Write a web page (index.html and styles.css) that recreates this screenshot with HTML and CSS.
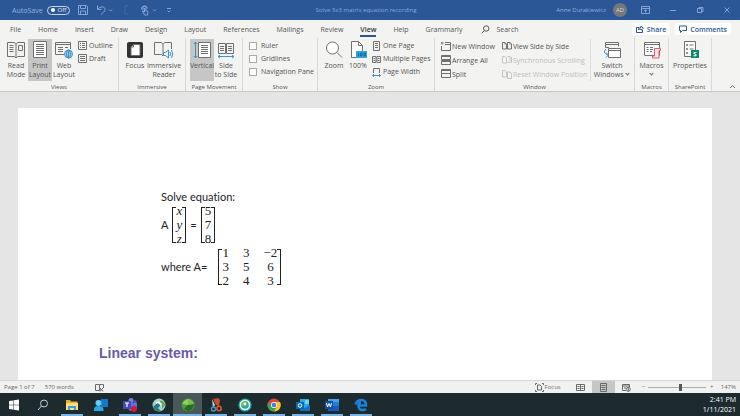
FILE: index.html
```html
<!DOCTYPE html>
<html lang="en">
<head>
<meta charset="utf-8">
<title>Solve 3x3 matrix equation recording</title>
<link rel="stylesheet" href="styles.css">
</head>
<body>
<header class="titlebar">
  <div class="quick">
    <label class="autosave">AutoSave <input type="checkbox" role="switch"><span class="switch">Off</span></label>
    <button class="qbtn" aria-label="Save"><svg width="10" height="10" viewBox="0 0 10 10"><path d="M.5.5h8l1 1v8h-9zM2.5.5v3h5v-3M2.5 9.500v-3.500h5v3.500"/></svg></button>
    <button class="qbtn" aria-label="Undo"><svg width="18" height="10" viewBox="0 0 18 10"><path d="M1.500.5v4h4M1.500 4.500C4 1 9 1 9 4.500c0 2-2 3-4 5M13 4.500l1.500 1.500L16 4.500"/></svg></button>
    <button class="qbtn dim" aria-label="Redo"><svg width="10" height="10" viewBox="0 0 10 10"><path d="M6 1H3v8h3"/></svg></button>
    <button class="qbtn" aria-label="Touch mode"><svg width="18" height="11" viewBox="0 0 18 11"><path d="M3 5.500V2.500a1.500 1.500 0 0 1 3 0V5M1.500 4.500a3 3 0 1 1 6-1M4.500 3v4L2.500 6l2 4h3l.5-3.500L4.500 5M13 4.500l1.500 1.500L16 4.500"/></svg></button>
    <button class="qbtn" aria-label="Customize toolbar"><svg width="6" height="6" viewBox="0 0 6 6"><path d="M1 1.500h4M1.500 3.500L3 5l1.500-1.500"/></svg></button>
  </div>
  <div class="doc-name">Solve 3x3 matrix equation recording</div>
  <div class="account">
    <span>Anne Durakiewicz</span><span class="avatar">AD</span>
    <button class="winbtn" aria-label="Ribbon display options"><svg width="9" height="8" viewBox="0 0 9 8"><path d="M.5.5h8v7h-8zM.5 2.500h8M4.500 6.500V4M3.200 5l1.300-1.300L5.800 5"/></svg></button>
    <button class="winbtn" aria-label="Minimize"><svg width="8" height="8" viewBox="0 0 8 8"><path d="M1 4.500h6"/></svg></button>
    <button class="winbtn" aria-label="Restore"><svg width="8" height="8" viewBox="0 0 8 8"><path d="M1.500 2.500h4v4h-4zM3 2.500v-1h4v4H5.500"/></svg></button>
    <button class="winbtn" aria-label="Close"><svg width="8" height="8" viewBox="0 0 8 8"><path d="M1.500 1.500l5 5M6.500 1.500l-5 5"/></svg></button>
  </div>
</header>

<nav class="tabs">
  <button>File</button><button>Home</button><button>Insert</button><button>Draw</button><button>Design</button><button>Layout</button><button>References</button><button>Mailings</button><button>Review</button><button class="current">View</button><button>Help</button><button>Grammarly</button>
  <button class="search"><svg width="9" height="9" viewBox="0 0 9 9"><circle cx="5.200" cy="3.500" r="2.700"/><path d="M3.300 5.500L.7 8.300"/></svg>Search</button>
  <div class="share">
    <button><svg width="8" height="8" viewBox="0 0 8 8"><path d="M3 2.500H.5v5h6V5M2.500 5c0-2 1-2.500 2.500-2.500V1l2.500 2.200L5 5.200V4C4 4 3 4 2.500 5z"/></svg>Share</button>
    <button><svg width="8" height="8" viewBox="0 0 8 8"><path d="M.5 1h7v4.500H3.500l-2 2v-2h-1z"/></svg>Comments</button>
  </div>
</nav>

<main class="ribbon">
  <section class="group">
    <div class="tools">
      <button class="big"><svg width="18" height="18" viewBox="0 0 18 18"><path d="M9 3.500L7.500 1.500h-7v14h7L9 17l1.500-1.500h7v-14h-7zM9 3.500V17"/><path d="M2.500 4.500h4M2.500 6.500h4M2.500 8.500h4M2.500 10.500h4M11.500 4.500h4v5h-4z"/></svg><span>Read<br>Mode</span></button>
      <button class="big on"><svg width="14" height="18" viewBox="0 0 14 18"><path class="paper" d="M.5.5h13v16H.5z"/><path d="M3 3.500h8M3 5.500h8M3 7.500h8M3 9.500h8M3 11.500h8M3 13.500h8"/></svg><span>Print<br>Layout</span></button>
      <button class="big"><svg width="18" height="18" viewBox="0 0 18 18"><path d="M9 13.500H.5v-12h15V8M.5 3.500h15M3 6.500h5M3 8.500h5M3 10.500h5M10 6.500h3"/><g class="blue"><circle class="paper" cx="13.500" cy="13" r="4"/><path d="M9.500 13h8M13.500 9v8M10.500 11h6M10.500 15h6"/><ellipse cx="13.500" cy="13" rx="2" ry="4"/></g></svg><span>Web<br>Layout</span></button>
      <div class="stack">
        <button class="small"><svg width="9" height="9" viewBox="0 0 9 9"><path d="M.5.5h8v8h-8zM2 2.500h1M4 2.500h3M2 4.500h1M4 4.500h3M2 6.500h1M4 6.500h3"/></svg>Outline</button>
        <button class="small"><svg width="9" height="9" viewBox="0 0 9 9"><path d="M.5.5h8v8h-8zM2 2.500h5M2 4.500h5M2 6.500h5"/></svg>Draft</button>
      </div>
    </div>
    <h2>Views</h2>
  </section>
  <section class="group">
    <div class="tools">
      <button class="big"><svg width="18" height="18" viewBox="0 0 18 18"><rect x="1" y="1" width="16" height="16" rx="2" fill="#333" stroke="none"/><path class="paper" d="M7.500 3.500H13q1 0 1 1v9q0 1-1 1H6q-1 0-1-1V6z"/><path d="M7.500 3.500V6H5"/></svg><span>Focus</span></button>
      <button class="big wide"><svg width="20" height="18" viewBox="0 0 20 18"><path d="M9 3.500L7.500 1.500h-7v12h7L9 15M9 3.500L10.500 1.500h7V8M9 3.500V15"/><path class="blue" d="M9.500 11.500v3h2l3 2.500V9l-3 2.500zM16 11q1.500 2 0 4M17.500 9q2.500 4 0 8"/></svg><span>Immersive<br>Reader</span></button>
    </div>
    <h2>Immersive</h2>
  </section>
  <section class="group">
    <div class="tools">
      <button class="big on"><svg width="18" height="18" viewBox="0 0 18 18"><path class="paper" d="M5.500 1.500h12v15h-12z"/><path d="M8 4.500h7M8 6.500h7M8 8.500h7M8 10.500h7M8 12.500h7"/><path class="blue" d="M2.500 1v16M.8 3l1.700-2 1.700 2M.8 15l1.700 2 1.700-2"/></svg><span>Vertical</span></button>
      <button class="big"><svg width="18" height="18" viewBox="0 0 18 18"><path d="M1.500 2.500h7v10h-7zM9.500 2.500h7v10h-7zM3 5.500h4M3 7.500h4M3 9.500h4M11 5.500h4M11 7.500h4M11 9.500h4"/><path class="blue" d="M1 15.500h16M3 13.800l-2 1.700 2 1.700M15 13.800l2 1.700-2 1.700"/></svg><span>Side<br>to Side</span></button>
    </div>
    <h2>Page Movement</h2>
  </section>
  <section class="group">
    <div class="tools">
      <div class="stack">
        <label class="small check"><input type="checkbox">Ruler</label>
        <label class="small check"><input type="checkbox">Gridlines</label>
        <label class="small check"><input type="checkbox">Navigation Pane</label>
      </div>
    </div>
    <h2>Show</h2>
  </section>
  <section class="group">
    <div class="tools">
      <button class="big"><svg width="18" height="18" viewBox="0 0 18 18"><circle class="paper" cx="7.500" cy="7" r="6"/><path d="M12 11.500l5 5"/></svg><span>Zoom</span></button>
      <button class="big"><svg width="18" height="18" viewBox="0 0 18 18"><path class="paper" d="M2.500.5h7l4 4v12h-11z"/><path d="M9.500.5v4h4"/><path fill="#34a5dc" stroke="none" d="M7 10h11v7H7z"/><path stroke="#176a9b" d="M9.500 12v3.500M11.500 12h1.500v3h-1.500zM15 12h1.500v3H15z"/></svg><span>100%</span></button>
      <div class="stack">
        <button class="small"><svg width="9" height="10" viewBox="0 0 9 10"><path d="M1.500.5h6v9h-6zM3 2.500h3M3 4.500h3M3 6.500h3"/></svg>One Page</button>
        <button class="small"><svg width="9" height="10" viewBox="0 0 9 10"><path d="M.5 2.500h3.500v6H.5zM5 2.500h3.500v6H5zM1.500 4.500H3M1.500 6.500H3M6 4.500h1.500M6 6.500h1.500"/></svg>Multiple Pages</button>
        <button class="small"><svg width="9" height="10" viewBox="0 0 9 10"><path d="M1.500 6V1.500h6V6"/><path class="blue" d="M.5 8.500h8M2 7L.5 8.500 2 10M7 7l1.500 1.500L7 10"/></svg>Page Width</button>
      </div>
    </div>
    <h2>Zoom</h2>
  </section>
  <section class="group">
    <div class="tools">
      <div class="stack tall">
        <button class="small"><svg width="10" height="10" viewBox="0 0 10 10"><path d="M4 1.500h5.500v8h-9V5M4 3.500h5.500M1 3.500V1M0 2h2.500"/></svg>New Window</button>
        <button class="small"><svg width="10" height="10" viewBox="0 0 10 10"><path d="M.5.5h9v4h-9zM.5 5.500h9v4h-9zM.5 1.500h9M.5 6.500h9"/></svg>Arrange All</button>
        <button class="small"><svg width="10" height="10" viewBox="0 0 10 10"><path d="M.5.5h9v8h-9zM.5 1.500h9M.5 4.500h9"/></svg>Split</button>
      </div>
      <div class="stack tall second">
        <button class="small"><svg width="10" height="10" viewBox="0 0 10 10"><path d="M.5 1.500H3l1.500 1.500v5h-4zM5.500 1.500H8l1.500 1.500v5h-4zM3 1.500v2M8 1.500v2"/></svg>View Side by Side</button>
        <button class="small" disabled><svg width="10" height="10" viewBox="0 0 10 10"><path d="M.5 1.500H3l1.500 1.500v5h-4zM5.500 1.500H8v6H5.500M9.500 2v6"/></svg>Synchronous Scrolling</button>
        <button class="small" disabled><svg width="10" height="10" viewBox="0 0 10 10"><path d="M.5 1.500H3l1.500 1.500v5h-4zM5.500 3H8l1.500 1.500v5h-4z"/></svg>Reset Window Position</button>
      </div>
      <button class="big switcher"><svg width="18" height="18" viewBox="0 0 18 18"><path d="M6 6.500H2.500v-5h13v4M2.500 3.500h13"/><path class="paper" d="M5.500 7.500h12v9h-12z"/><path d="M5.500 9.500h12"/><path class="blue" d="M3 8q-4 4 2 6M3 11.500l2.500 2.500-2.500 2.500"/></svg><span>Switch<br>Windows <span class="caret"></span></span></button>
    </div>
    <h2>Window</h2>
  </section>
  <section class="group centered">
    <div class="tools">
      <button class="big wide"><svg width="18" height="18" viewBox="0 0 18 18"><path class="paper" d="M1.500 1.500h15v13h-15z"/><path d="M1.500 3.500h15M3.500 6.500h2M7 6.500h3M3.500 8.500h2M7 8.500h3M3.500 10.500h2M7 10.500h2"/><path fill="#fbe8ea" stroke="#e35b72" d="M11.500 7.500h6v2h-1.500v7.500h-6.500v-2h2z"/></svg><span>Macros<br><span class="caret"></span></span></button>
    </div>
    <h2>Macros</h2>
  </section>
  <section class="group centered">
    <div class="tools">
      <button class="big wide"><svg width="18" height="18" viewBox="0 0 18 18"><path class="paper" d="M3.500.5h11v15h-11z"/><path d="M5.500 3.500h1v1h-1zM8.500 4h4M5.500 7.500h1v1h-1zM8.500 8h4M5.500 11.500h1v1h-1z"/><path fill="#0b8a6a" stroke="none" d="M10 9h8v8h-8z"/><path stroke="#fff" d="M15.500 11.500h-2.500q-1 1.200 1 1.500 2 .6 1 1.800h-2.500"/></svg><span>Properties</span></button>
    </div>
    <h2>SharePoint</h2>
  </section>
  <div class="collapse"><button aria-label="Collapse ribbon"><svg width="7" height="5" viewBox="0 0 7 5"><path d="M1 4l2.500-2.500L6 4"/></svg></button></div>
</main>

<div class="workspace">
  <article class="page">
    <p>Solve equation:</p>
    <div class="equation"><span>A</span>
      <div class="matrix"><i>x</i><i>y</i><i>z</i></div><span>=</span>
      <div class="matrix"><b>5</b><b>7</b><b>8</b></div>
    </div>
    <div class="equation"><span class="where">where A=</span>
      <div class="matrix three"><b>1</b><b>3</b><b>−2</b><b>3</b><b>5</b><b>6</b><b>2</b><b>4</b><b>3</b></div>
    </div>
    <h1>Linear system:</h1>
  </article>
</div>

<div class="statusbar">
  <span>Page 1 of 7</span><span class="words">570 words</span>
  <button aria-label="Proofing"><svg width="9" height="9" viewBox="0 0 9 9"><path d="M4.500 7.500h-4v-6h4v6l1-1M4.500 1.500h4V5M5 5l3 3.500M8 5L5 8.500"/></svg></button>
  <button class="focus"><svg width="9" height="9" viewBox="0 0 9 9"><path d="M.5 2V.5H2M7 .5h1.500V2M.5 7v1.500H2M7 8.500h1.500V7M2.500 2H5l1.500 1.500V7h-4z"/></svg>Focus</button>
  <button class="mode" aria-label="Read mode"><svg width="9" height="9" viewBox="0 0 9 9"><path d="M.5 1.500h8v6h-8zM4.500 1.500v6M1.500 3.500h2M1.500 5.500h2M5.500 3.500h2M5.500 5.500h2"/></svg></button>
  <button class="mode on" aria-label="Print layout"><svg width="7" height="9" viewBox="0 0 7 9"><path d="M.5.5h6v8h-6zM1.500 2.500h4M1.500 4.500h4M1.500 6.500h4"/></svg></button>
  <button class="mode" aria-label="Web layout"><svg width="9" height="9" viewBox="0 0 9 9"><path d="M4 7.500H.5v-6h7V4M.5 3h7M2 5h2"/><circle cx="6.300" cy="6.300" r="2"/><path d="M6.300 4.500v4"/></svg></button>
  <button class="step" aria-label="Zoom out">−</button>
  <input class="zoom" type="range" min="10" max="250" value="147" aria-label="Zoom">
  <button class="step" aria-label="Zoom in">+</button>
  <span class="percent">147%</span>
</div>

<footer class="taskbar">
  <button aria-label="Start"><svg width="16" height="16" viewBox="0 0 16 16"><path fill="#fff" d="M3 4l4-.6v4.300H3zM7.500 3.300L13 2.500v5.200H7.500zM3 8.300h4v4.200L3 12zM7.500 8.300H13v5.200l-5.500-.8z"/></svg></button>
  <button aria-label="Search"><svg width="16" height="16" viewBox="0 0 16 16"><g fill="none" stroke="#c8d0d0"><circle cx="9" cy="6.500" r="3.500"/><path d="M6.500 9L3 13"/></g></svg></button>
  <button class="open" aria-label="File Explorer"><svg width="16" height="16" viewBox="0 0 16 16"><path fill="#e9ae2a" d="M2 3h4l1 1.500h6.500V13H2z"/><path fill="#ffdf7b" d="M2 6h12v7H2z"/><path fill="#3b9bd5" d="M4 9h8v4h-2v-2H6v2H4z"/></svg></button>
  <button aria-label="People"><svg width="16" height="16" viewBox="0 0 16 16"><path fill="#1478c8" d="M8 2h7v8H8z"/><circle cx="5.500" cy="6" r="3" fill="#63ccf5"/><path fill="#29a8e8" d="M1 14v-2q0-3 4.500-3t5 3v2z"/></svg></button>
  <button class="open" aria-label="Teams"><svg width="16" height="16" viewBox="0 0 16 16"><circle cx="9" cy="3.500" r="2.500" fill="#7b83eb"/><circle cx="13" cy="5" r="1.700" fill="#5059c9"/><path fill="#6670d0" d="M6 6h9v4q-1 4-5 4t-4-4z"/><path fill="#444cae" d="M1 4h8v8H1z"/><path stroke="#fff" stroke-width="1.200" d="M3 6h4M5 6v4"/><circle cx="12" cy="12" r="3" fill="#d21847"/></svg></button>
  <button class="open" aria-label="Camtasia"><svg width="16" height="16" viewBox="0 0 16 16"><circle cx="8" cy="8" r="6.500" fill="#a4d3cf"/><path fill="#2a7a83" d="M2 10l6-6 3 3-4 4 3 3Q4 15 2 10z"/><path fill="#58aa47" d="M8 4q5-1 6 4l-3 4V7z"/><path fill="#fff" d="M5 5l3-1 3 3-1 2-3-3-2 1z"/></svg></button>
  <button class="open active" aria-label="Recorder"><svg width="16" height="16" viewBox="0 0 16 16"><circle cx="8" cy="8" r="6.500" fill="#4b9a36"/><path fill="#8fd35e" d="M2 7q3-5 7-5L8 8z"/><path fill="#246b25" d="M8 8l6-1q-1 6-6 7.500L4 12z"/><path fill="#78bd4b" d="M9 2q4 1 5 5L8 8z"/></svg></button>
  <button class="open" aria-label="Snip"><svg width="16" height="16" viewBox="0 0 16 16"><path fill="#c94c2b" d="M5 2l5-1 2 2-1 6-3-1z"/><path fill="#b6d9e9" d="M4 2l3 6-2 3z"/><g fill="none" stroke-width="1.500"><circle cx="5.500" cy="12" r="2" stroke="#4297c8"/><circle cx="11" cy="11.500" r="2.200" stroke="#e25336"/></g></svg></button>
  <button class="open" aria-label="Webex"><svg width="16" height="16" viewBox="0 0 16 16"><circle cx="8" cy="8" r="6" fill="#e6f6f3" stroke="#18a69b" stroke-width="1.200"/><circle cx="8" cy="8" r="3.800" fill="#28aaa0"/><path fill="#75bd4c" d="M5 10a4 4 0 0 1 6-5z"/><circle cx="8" cy="7" r="1.500" fill="#fff"/></svg></button>
  <button class="open" aria-label="Chrome"><svg width="16" height="16" viewBox="0 0 16 16"><circle cx="8" cy="8" r="6.500" fill="#e0453a"/><path fill="#f8c727" d="M8 5h6a6.500 6.500 0 0 1-6 9.500L11 9z"/><path fill="#36a454" d="M2.400 4.700A6.500 6.500 0 0 0 8 14.500L10.500 9.500 5.500 9.500z"/><circle cx="8" cy="8" r="3" fill="#fff"/><circle cx="8" cy="8" r="2.300" fill="#3f7de8"/></svg></button>
  <button class="open" aria-label="Outlook"><svg width="16" height="16" viewBox="0 0 16 16"><path fill="#29a8ea" d="M5 2h9v12H5z"/><path fill="#1471bd" d="M5 8l5 3 5-3v6H5z"/><path fill="#73d0f5" d="M10 3h4v4h-4z"/><path fill="#0868b6" d="M1 5h8v7H1z"/><circle cx="5" cy="8.500" r="1.800" fill="none" stroke="#fff"/></svg></button>
  <button class="open" aria-label="Word"><svg width="16" height="16" viewBox="0 0 16 16"><path fill="#41a5ee" d="M4 2h11v4H4z"/><path fill="#2b7cd3" d="M4 5h11v4H4z"/><path fill="#185abd" d="M4 9h11v5H4z"/><path fill="#174ca4" d="M1 4h8v8H1z"/><path fill="none" stroke="#fff" d="M2.500 6l1 4L5 6.500 6.500 10l1-4"/></svg></button>
  <button class="open" aria-label="Edge"><svg width="16" height="16" viewBox="0 0 16 16"><path fill="none" stroke="#1683dc" stroke-width="2.500" d="M2.500 7.500Q4 3 8.500 3 13 3 13 8.500H5.500Q5.500 13 9.500 13q2 0 3.500-1M5.500 8.500Q5.500 6 8 5.500"/></svg></button>
  <div class="clock"><time>2:41 PM</time><time>1/11/2021</time></div>
</footer>
</body>
</html>
```
FILE: styles.css
```css
* { box-sizing: border-box; }
body {
  margin: 0;
  height: 100vh;
  display: flex;
  flex-direction: column;
  overflow: hidden;
  background: #e5e5e5;
  color: #555;
  font: 7px/9px "Open Sans", "Noto Sans", sans-serif;
}
button {
  border: 0;
  padding: 0;
  background: none;
  color: inherit;
  font: inherit;
}
svg { display: block; flex: none; }
.titlebar svg, .tabs svg, .ribbon svg, .statusbar svg { fill: none; stroke: currentColor; }
.ribbon svg { color: #707070; }
.ribbon :disabled svg { color: #c4c4c4; }

/* Title bar */
.titlebar {
  flex: none;
  height: 20px;
  display: grid;
  grid-template-columns: 311fr 110fr 319fr;
  align-items: center;
  background: #2b5797;
  color: #94b2dc;
  font-size: 6px;
}
.titlebar svg { color: #83a5d6; }
.quick { display: flex; align-items: center; gap: 8px; padding-left: 12px; }
.autosave { display: flex; align-items: center; gap: 4px; font-size: 7px; }
.autosave input { position: absolute; opacity: 0; }
.switch {
  display: flex;
  align-items: center;
  gap: 3px;
  height: 9px;
  padding: 0 3px;
  border: 1px solid #c5d5ec;
  border-radius: 5px;
  color: #e0e9f6;
  font-size: 6px;
}
.switch::before { content: ""; width: 4px; height: 4px; border-radius: 50%; background: #fff; }
.dim { opacity: .25; }
.doc-name { text-align: center; white-space: nowrap; color: #86a8d8; }
.account { display: flex; align-items: center; justify-content: flex-end; white-space: nowrap; }
.avatar {
  width: 14px;
  height: 14px;
  margin: 0 5px 0 7px;
  border-radius: 50%;
  background: #76777c;
  color: #d8d8da;
  line-height: 14px;
  text-align: center;
}
.winbtn { width: 27px; height: 20px; display: grid; place-items: center; }

/* Tabs */
.tabs {
  flex: none;
  height: 18px;
  display: flex;
  align-items: center;
  gap: 17px;
  padding: 0 9px 0 10px;
  background: #f3f3f2;
}
.tabs > button { height: 16px; border-bottom: 2px solid transparent; border-top: 2px solid transparent; }
.tabs > .current { border-bottom-color: #2b5797; color: #333; font-weight: 600; }
.tabs > .search { display: flex; align-items: center; gap: 6px; margin-left: 2px; }
.share { display: flex; gap: 5px; margin-left: auto; }
.share button {
  display: flex;
  align-items: center;
  gap: 3px;
  height: 12px;
  padding: 0 4px;
  border-radius: 2px;
  background: #fff;
  color: #2b5797;
  font-weight: 600;
}

/* Ribbon */
.ribbon {
  flex: none;
  height: 54px;
  display: grid;
  grid-template-columns: 119fr 67fr 57fr 75fr 117fr 200fr 34fr 43fr 28fr;
  border-bottom: 1px solid #c9c9c9;
  background: #f3f3f2;
}
.group {
  display: flex;
  flex-direction: column;
  justify-content: space-between;
  min-width: 0;
  padding-top: 1px;
  border-right: 1px solid #d9d9d9;
}
.group h2 { margin: 0; text-align: center; font-size: 6px; line-height: 7px; font-weight: 400; white-space: nowrap; }
.tools { display: flex; align-items: flex-start; padding-left: 4px; white-space: nowrap; }
.centered .tools { justify-content: center; padding-left: 0; }
.big {
  width: 24px;
  height: 42px;
  display: flex;
  flex-direction: column;
  align-items: center;
  gap: 2px;
  padding-top: 2px;
  text-align: center;
}
.wide { width: 34px; }
.on { background: #c6c6c6; }
.paper { fill: #fff; }
.blue { stroke: #3f93c8; }
.stack { display: flex; flex-direction: column; margin-left: 2px; }
.small { display: flex; align-items: center; gap: 2px; height: 13px; }
.small:disabled { color: #bdbdbd; }
.tall .small { height: 14px; gap: 1px; }
.second { margin-left: 7px; }
.check { gap: 4px; }
.check input {
  appearance: none;
  width: 8px;
  height: 8px;
  margin: 0;
  border: 1px solid #aaa;
  background: #fff;
}
.switcher { width: 43px; margin: 0 1px 0 auto; border-left: 1px solid #dedede; }
.caret {
  display: inline-block;
  width: 3px;
  height: 3px;
  margin: 0 1px 2px;
  border: solid #666;
  border-width: 0 1px 1px 0;
  rotate: 45deg;
}
.collapse { display: flex; align-items: flex-end; justify-content: flex-end; padding: 0 4px 2px 0; }

/* Document */
.workspace { flex: 1; min-height: 0; padding: 16px 28px 0 18px; overflow: hidden; }
.page {
  height: 100%;
  padding: 82px 20px 0 143px;
  background: #fff;
  color: #222;
  font: 11px/14px Lato, sans-serif;
  font-variant-ligatures: none;
}
.page p { margin: 0; }
.equation { display: flex; align-items: center; gap: 4px; }
.matrix {
  position: relative;
  display: grid;
  padding: 0 4px;
  font: 13px/14px "Liberation Serif", serif;
  text-align: center;
}
.matrix i, .matrix b { font-weight: 400; }
.matrix::before, .matrix::after {
  content: "";
  position: absolute;
  top: 3px;
  bottom: 3px;
  width: 3px;
  border: 1px solid #222;
}
.matrix::before { left: 0; border-right: 0; }
.matrix::after { right: 0; border-left: 0; }
.three { grid-template-columns: auto auto auto; column-gap: 14px; }
.where { margin-right: 7px; }
.page h1 {
  margin: 56px 0 0 -62px;
  color: #6a5aa8;
  font: bold 14px/18px "Liberation Sans", sans-serif;
}

/* Status bar */
.statusbar {
  flex: none;
  height: 13px;
  display: flex;
  align-items: center;
  padding: 0 4px;
  border-top: 1px solid #d6d6d6;
  background: #f1f1f1;
  color: #6a6a6a;
  font-size: 6px;
  white-space: nowrap;
}
.words { margin: 0 21px 0 10px; }
.focus { display: flex; align-items: center; gap: 1px; margin: 0 8px 0 auto; }
.mode { width: 23px; height: 12px; display: grid; place-items: center; }
.step { width: 8px; margin-left: 2px; }
.zoom { appearance: none; width: 58px; height: 9px; margin: 0; background: linear-gradient(#aaa, #aaa) center / 100% 1px no-repeat; }
.zoom::-webkit-slider-thumb { appearance: none; width: 3px; height: 7px; background: #555; }
.percent { margin-left: 5px; }

/* Taskbar */
.taskbar { flex: none; height: 23px; display: flex; background: #1d2b2e; color: #fff; }
.taskbar button { width: 3.9%; display: grid; place-items: center; }
.open { background: linear-gradient(#78b4e4, #78b4e4) center bottom / 22px 2px no-repeat; }
.active { background-color: #4a5859; background-size: 100% 2px; }
.clock { display: flex; flex-direction: column; justify-content: center; margin-left: auto; padding-right: 4px; text-align: right; line-height: 10px; }
```
